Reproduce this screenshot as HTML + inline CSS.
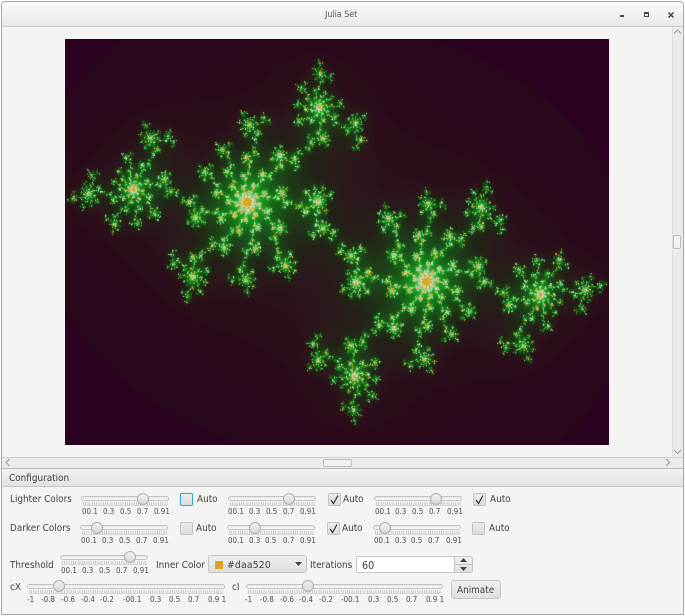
<!DOCTYPE html>
<html><head><meta charset="utf-8"><title>Julia Set</title>
<style>
html,body{margin:0;padding:0;background:#fff;width:685px;height:616px;overflow:hidden}
body{position:relative;font-family:"DejaVu Sans","Liberation Sans",sans-serif;color:#333}
div,span,canvas{position:absolute;box-sizing:border-box}
.t{white-space:nowrap;font-size:9.6px;line-height:12px;color:#3f3f3f;transform:scaleX(.925);transform-origin:0 0;margin-top:1px}
.n{white-space:nowrap;font-size:8.1px;line-height:10px;color:#4a4a4a;transform:scaleX(.88);transform-origin:0 0}
.tr{height:5px;width:88px;border:1px solid #c4c4c4;border-radius:3px;background:linear-gradient(#e6e6e6,#fafafa)}
.tk{height:4px;background:repeating-linear-gradient(90deg,#c0c0c0 0 1px,transparent 1px 2.2px);border-bottom:1px solid #cfcfcf;opacity:.8}
.th{width:12px;height:12px;border-radius:50%;border:1px solid #b0b0b0;background:linear-gradient(#f2f2f2,#d6d6d6)}
.cb{width:13px;height:13px;border-radius:2px;border:1px solid #c2c2c2;background:linear-gradient(#ececec,#dcdcdc)}
</style></head><body>
<div style="left:1px;top:1px;width:683px;height:614px;border:1px solid #a8a8a8;border-radius:4px 4px 0 0;background:#f4f4f2"></div>
<div style="left:2px;top:2px;width:681px;height:25px;background:linear-gradient(#fbfbfb,#e9e9e7);border-bottom:1px solid #c8c8c8;border-radius:3px 3px 0 0"></div>
<div class="t" style="left:325px;top:8px;font-size:8.6px;color:#555">Julia Set</div>
<div style="left:620px;top:15px;width:4px;height:2px;background:#444"></div>
<div style="left:644px;top:12px;width:5px;height:5px;border:1px solid #444;border-top-width:2px"></div>
<svg style="position:absolute;left:668px;top:12px" width="6" height="6"><path d="M0.5 0.5L5.5 5.5M5.5 0.5L0.5 5.5" stroke="#444" stroke-width="1.5"/></svg>

<canvas id="c" width="544" height="406" style="left:65px;top:39px;width:544px;height:406px;background:#2b0320"></canvas>

<div style="left:672px;top:27px;width:11px;height:430px;background:#ebebe9;border-left:1px solid #dcdcdc"></div>
<svg style="position:absolute;left:673px;top:29px" width="9" height="6"><path d="M1 4.5L4.5 1L8 4.5" fill="none" stroke="#999"/></svg>
<svg style="position:absolute;left:673px;top:449px" width="9" height="6"><path d="M1 1L4.5 4.5L8 1" fill="none" stroke="#999"/></svg>
<div style="left:673px;top:235px;width:8px;height:14px;border:1px solid #bdbdbd;border-radius:2px;background:#f1f1f1"></div>
<div style="left:2px;top:457px;width:681px;height:11px;background:#ebebe9;border-top:1px solid #cfcfcf"></div>
<svg style="position:absolute;left:5px;top:458px" width="6" height="9"><path d="M4.5 1L1 4.5L4.5 8" fill="none" stroke="#999"/></svg>
<svg style="position:absolute;left:665px;top:458px" width="6" height="9"><path d="M1 1L4.5 4.5L1 8" fill="none" stroke="#999"/></svg>
<div style="left:323px;top:459px;width:29px;height:8px;border:1px solid #bdbdbd;border-radius:2px;background:#f1f1f1"></div>

<div style="left:2px;top:468px;width:681px;height:19px;background:linear-gradient(#f2f2f2,#e2e2e2);border-bottom:1px solid #c4c4c4;border-top:1px solid #bbb"></div>
<div class="t" style="left:9px;top:472px">Configuration</div>

<div class="t" style="left:10px;top:493px">Lighter Colors</div>
<div class="t" style="left:10px;top:522px">Darker Colors</div>
<div class="t" style="left:10px;top:559px">Threshold</div>
<div class="t" style="left:156px;top:559px">Inner Color</div>
<div class="t" style="left:310px;top:559px">Iterations</div>
<div class="t" style="left:10px;top:581px">cX</div>
<div class="t" style="left:232px;top:581px">cI</div>

<!-- row 1 -->
<div class="tr" style="left:81px;top:496px"></div><div class="tk" style="left:83px;top:502px;width:85px"></div><div class="th" style="left:137px;top:493px"></div>
<div class="n" style="left:82px;top:506px">00.1</div><div class="n" style="left:103px;top:506px">0.3</div><div class="n" style="left:120px;top:506px">0.5</div><div class="n" style="left:137px;top:506px">0.7</div><div class="n" style="left:154px;top:506px">0.91</div>
<div class="cb" style="left:180px;top:493px;border:1.5px solid #39a6cc;box-shadow:0 0 1px #7cc"></div>
<div class="t" style="left:197px;top:493px">Auto</div>

<div class="tr" style="left:228px;top:496px"></div><div class="tk" style="left:230px;top:502px;width:85px"></div><div class="th" style="left:283px;top:493px"></div>
<div class="n" style="left:228px;top:506px">00.1</div><div class="n" style="left:249px;top:506px">0.3</div><div class="n" style="left:266px;top:506px">0.5</div><div class="n" style="left:283px;top:506px">0.7</div><div class="n" style="left:300px;top:506px">0.91</div>
<div class="cb" style="left:328px;top:493px"></div>
<svg style="position:absolute;left:328px;top:493px" width="13" height="13"><path d="M3 7L5.5 10.5L10 2.5" fill="none" stroke="#333" stroke-width="1.2"/></svg>
<div class="t" style="left:343px;top:493px">Auto</div>

<div class="tr" style="left:374px;top:496px"></div><div class="tk" style="left:376px;top:502px;width:85px"></div><div class="th" style="left:430px;top:493px"></div>
<div class="n" style="left:375px;top:506px">00.1</div><div class="n" style="left:395px;top:506px">0.3</div><div class="n" style="left:412px;top:506px">0.5</div><div class="n" style="left:429px;top:506px">0.7</div><div class="n" style="left:447px;top:506px">0.91</div>
<div class="cb" style="left:473px;top:493px"></div>
<svg style="position:absolute;left:473px;top:493px" width="13" height="13"><path d="M3 7L5.5 10.5L10 2.5" fill="none" stroke="#333" stroke-width="1.2"/></svg>
<div class="t" style="left:490px;top:493px">Auto</div>

<!-- row 2 -->
<div class="tr" style="left:80px;top:525px"></div><div class="tk" style="left:82px;top:531px;width:85px"></div><div class="th" style="left:91px;top:522px"></div>
<div class="n" style="left:81px;top:535px">00.1</div><div class="n" style="left:102px;top:535px">0.3</div><div class="n" style="left:119px;top:535px">0.5</div><div class="n" style="left:136px;top:535px">0.7</div><div class="n" style="left:153px;top:535px">0.91</div>
<div class="cb" style="left:180px;top:522px"></div>
<div class="t" style="left:196px;top:522px">Auto</div>

<div class="tr" style="left:227px;top:525px"></div><div class="tk" style="left:229px;top:531px;width:85px"></div><div class="th" style="left:249px;top:522px"></div>
<div class="n" style="left:228px;top:535px">00.1</div><div class="n" style="left:249px;top:535px">0.3</div><div class="n" style="left:265px;top:535px">0.5</div><div class="n" style="left:283px;top:535px">0.7</div><div class="n" style="left:300px;top:535px">0.91</div>
<div class="cb" style="left:327px;top:522px"></div>
<svg style="position:absolute;left:327px;top:522px" width="13" height="13"><path d="M3 7L5.5 10.5L10 2.5" fill="none" stroke="#333" stroke-width="1.2"/></svg>
<div class="t" style="left:342px;top:522px">Auto</div>

<div class="tr" style="left:373px;top:525px"></div><div class="tk" style="left:375px;top:531px;width:85px"></div><div class="th" style="left:379px;top:522px"></div>
<div class="n" style="left:374px;top:535px">00.1</div><div class="n" style="left:395px;top:535px">0.3</div><div class="n" style="left:411px;top:535px">0.5</div><div class="n" style="left:428px;top:535px">0.7</div><div class="n" style="left:446px;top:535px">0.91</div>
<div class="cb" style="left:472px;top:522px"></div>
<div class="t" style="left:489px;top:522px">Auto</div>

<!-- threshold -->
<div class="tr" style="left:60px;top:555px"></div><div class="tk" style="left:62px;top:561px;width:85px"></div><div class="th" style="left:124px;top:551px"></div>
<div class="n" style="left:61px;top:565px">00.1</div><div class="n" style="left:82px;top:565px">0.3</div><div class="n" style="left:99px;top:565px">0.5</div><div class="n" style="left:116px;top:565px">0.7</div><div class="n" style="left:133px;top:565px">0.91</div>

<div style="left:208px;top:555px;width:99px;height:18px;border:1px solid #c4c4c4;border-radius:3px;background:linear-gradient(#f0f0f0,#e0e0e0)"></div>
<div style="left:215px;top:561px;width:8px;height:8px;background:#daa520"></div>
<div class="t" style="left:227px;top:559px;font-size:10px;letter-spacing:.2px">#daa520</div>
<svg style="position:absolute;left:295px;top:562px" width="7" height="5"><path d="M0 0H7L3.5 4Z" fill="#444"/></svg>

<div style="left:356px;top:556px;width:99px;height:17px;border:1px solid #c6c6c6;border-radius:2px 0 0 2px;background:#fff"></div>
<div class="t" style="left:362px;top:559px;font-size:10.4px">60</div>
<div style="left:454px;top:556px;width:19px;height:17px;border:1px solid #c4c4c4;border-radius:0 3px 3px 0;background:linear-gradient(#f0f0f0,#e0e0e0)"></div>
<div style="left:454px;top:564px;width:19px;height:1px;background:#c4c4c4"></div>
<svg style="position:absolute;left:460px;top:558px" width="7" height="14"><path d="M0 4L3.5 0L7 4Z M0 9H7L3.5 13Z" fill="#444"/></svg>

<!-- cX -->
<div class="tr" style="left:27px;top:584px;width:198px"></div><div class="tk" style="left:29px;top:590px;width:194px"></div><div class="th" style="left:53px;top:580px"></div>
<div class="n" style="left:27px;top:594px">-1</div><div class="n" style="left:41px;top:594px">-0.8</div><div class="n" style="left:61px;top:594px">-0.6</div><div class="n" style="left:81px;top:594px">-0.4</div><div class="n" style="left:100px;top:594px">-0.2</div><div class="n" style="left:123px;top:594px">-00.1</div><div class="n" style="left:150px;top:594px">0.3</div><div class="n" style="left:169px;top:594px">0.5</div><div class="n" style="left:188px;top:594px">0.7</div><div class="n" style="left:208px;top:594px">0.9 1</div>
<!-- cI -->
<div class="tr" style="left:246px;top:584px;width:197px"></div><div class="tk" style="left:248px;top:590px;width:193px"></div><div class="th" style="left:302px;top:580px"></div>
<div class="n" style="left:245px;top:594px">-1</div><div class="n" style="left:260px;top:594px">-0.8</div><div class="n" style="left:280px;top:594px">-0.6</div><div class="n" style="left:299px;top:594px">-0.4</div><div class="n" style="left:319px;top:594px">-0.2</div><div class="n" style="left:341px;top:594px">-00.1</div><div class="n" style="left:368px;top:594px">0.3</div><div class="n" style="left:387px;top:594px">0.5</div><div class="n" style="left:406px;top:594px">0.7</div><div class="n" style="left:426px;top:594px">0.9 1</div>

<div style="left:451px;top:580px;width:50px;height:19px;border:1px solid #c4c4c4;border-radius:3px;background:linear-gradient(#f0f0f0,#e0e0e0)"></div>
<div class="t" style="left:457px;top:584px">Animate</div>

<script>
(function(){
var cv=document.getElementById('c'),g=cv.getContext('2d'),W=544,H=406,d=g.createImageData(W,H),a=d.data;
var cr=-0.70176,ci=-0.3842,N=60;
var stops=[[1,43,2,32],[2,42,8,28],[3,42,10,26],[5,42,14,26],[8,42,24,26],[12,36,32,24],[18,30,58,24],[26,24,95,26],[34,24,140,28],[40,34,170,40],[46,120,205,135],[52,190,225,210],[59,205,205,150]];
function col(n){
  if(n<=stops[0][0])return stops[0];
  for(var i=1;i<stops.length;i++){
    if(n<=stops[i][0]){var p=stops[i-1],q=stops[i],t=(n-p[0])/(q[0]-p[0]);
      return [0,p[1]+(q[1]-p[1])*t,p[2]+(q[2]-p[2])*t,p[3]+(q[3]-p[3])*t];}
  }
  return stops[stops.length-1];
}
for(var y=0;y<H;y++)for(var x=0;x<W;x++){
  var zr=-1.5+3*(x+.5)/W,zi=(-1+2*(y+.5)/H)*0.99,n=0;
  while(n<N&&zr*zr+zi*zi<4){var t=zr*zr-zi*zi+cr;zi=2*zr*zi+ci;zr=t;n++;}
  var k=(y*W+x)*4;
  if(n>=N){a[k]=218;a[k+1]=165;a[k+2]=32;}
  else{var c=col(n);a[k]=c[1];a[k+1]=c[2];a[k+2]=c[3];}
  a[k+3]=255;
}
g.putImageData(d,0,0);
})();
</script>
</body></html>
